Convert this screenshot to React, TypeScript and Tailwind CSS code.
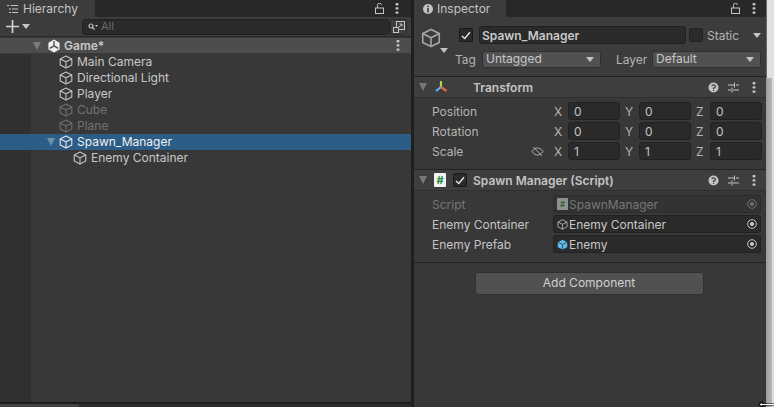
import React from "react";

const font = { fontFamily: "Inter, 'Noto Sans', sans-serif" };

function Cube({ size = 14, color = "#c4c4c4", className = "" }: { size?: number; color?: string; className?: string }) {
  return (
    <svg width={size} height={size} viewBox="0 0 14 14" fill="none" stroke={color} strokeWidth="1.1" strokeLinejoin="round" className={`shrink-0 ${className}`}>
      <path d="M7 1 L12.8 3.9 V10.1 L7 13 L1.2 10.1 V3.9 Z" />
      <path d="M1.2 3.9 L7 6.8 L12.8 3.9 M7 6.8 V13" />
    </svg>
  );
}

function Dots({ className = "" }: { className?: string }) {
  return (
    <svg width="4" height="11" viewBox="0 0 4 11" fill="#c4c4c4" className={`shrink-0 ${className}`}>
      <rect x="0.5" y="0" width="3" height="2.4" rx="0.8" />
      <rect x="0.5" y="4.2" width="3" height="2.4" rx="0.8" />
      <rect x="0.5" y="8.4" width="3" height="2.4" rx="0.8" />
    </svg>
  );
}

function Lock() {
  return (
    <svg width="9" height="11" viewBox="0 0 9 11" fill="none" stroke="#c4c4c4" strokeWidth="1" className="shrink-0">
      <rect x="0.5" y="5" width="8" height="5.5" />
      <path d="M2.5 5 V2.5 A2 2 0 0 1 6.5 2 " />
    </svg>
  );
}

function Tri({ color = "#6f6f6f", w = 8, h = 8 }: { color?: string; w?: number; h?: number }) {
  return (
    <svg width={w} height={h} viewBox="0 0 8 8" className="shrink-0" preserveAspectRatio="none">
      <path d="M0 0 H8 L4 8 Z" fill={color} />
    </svg>
  );
}

function Caret({ color = "#c4c4c4" }: { color?: string }) {
  return (
    <svg width="8" height="5" viewBox="0 0 8 5" className="shrink-0">
      <path d="M0 0 H8 L4 5 Z" fill={color} />
    </svg>
  );
}

function Check() {
  return (
    <span className="w-[14px] h-[14px] bg-[#2a2a2a] border border-[#191919] rounded-[2px] flex items-center justify-center shrink-0">
      <svg width="10" height="9" viewBox="0 0 10 9" fill="none" stroke="#e0e0e0" strokeWidth="1.5">
        <path d="M1 5 L3.8 7.5 L9 1.2" />
      </svg>
    </span>
  );
}

function HeaderIcons() {
  return (
    <div className="flex items-center shrink-0">
      <svg width="11" height="11" viewBox="0 0 11 11" className="shrink-0">
        <circle cx="5.5" cy="5.5" r="5" fill="#c4c4c4" />
        <path d="M3.8 4.2 A1.8 1.7 0 1 1 5.5 6.2 V7" stroke="#3c3c3c" strokeWidth="1.2" fill="none" />
        <rect x="4.9" y="7.7" width="1.2" height="1.2" fill="#3c3c3c" />
      </svg>
      <svg width="11" height="11" viewBox="0 0 11 11" stroke="#c4c4c4" strokeWidth="1" fill="none" className="shrink-0 ml-[9px]">
        <path d="M0 3 H6 M8 3 H11 M6.5 0.5 V5.5 M0 8 H3 M5 8 H11 M4 5.5 V10.5" />
      </svg>
      <Dots className="ml-[13px]" />
    </div>
  );
}

function Row({ label, indent = 59, dim = false, selected = false, arrow = false }: { label: string; indent?: number; dim?: boolean; selected?: boolean; arrow?: boolean }) {
  return (
    <div className={`h-[16px] flex items-center text-[12px] ${selected ? "bg-[#2c5d87] text-[#f0f0f0]" : dim ? "text-[#717171]" : "text-[#c8c8c8]"}`} style={{ paddingLeft: arrow ? indent - 12 : indent }}>
      {arrow && <span className="w-[12px]"><Tri color="#6f8fa8" w={8} h={8} /></span>}
      <Cube color={dim ? "#6e6e6e" : selected ? "#e6e6e6" : "#c4c4c4"} className="mr-[4px]" />
      <span>{label}</span>
    </div>
  );
}

function Num({ axis, value }: { axis: string; value: string }) {
  return (
    <div className="flex items-center">
      <span className="w-[14px] pt-[1px] text-[#b4b4b4] text-[12px]">{axis}</span>
      <span className="w-[52px] h-[18px] pt-[1px] bg-[#2a2a2a] border border-[#212121] rounded-[3px] pl-[5px] flex items-center text-[#c4c4c4] text-[12px]">{value}</span>
    </div>
  );
}

function VecRow({ label, v, link = false }: { label: string; v: string; link?: boolean }) {
  return (
    <div className="h-[20px] flex items-center pl-[18px]">
      <span className="w-[99px] pt-[1px] text-[#b4b4b4] text-[12px]">{label}</span>
      <span className="w-[22px] shrink-0 flex items-center">
        {link && (
          <svg width="13" height="11" viewBox="0 0 13 11" fill="none" stroke="#b0b0b0" strokeWidth="1">
            <path d="M1 5.5 C3 2.5 5 2 6.5 2 C8 2 10 2.5 12 5.5 C10 8.5 8 9 6.5 9 C5 9 3 8.5 1 5.5 Z" />
            <path d="M2.5 1 L11 10" />
          </svg>
        )}
      </span>
      <div className="flex gap-[5px] ml-[1px]">
        <Num axis="X" value={v} />
        <Num axis="Y" value={v} />
        <Num axis="Z" value={v} />
      </div>
    </div>
  );
}

function ObjField({ label, value, icon, dim = false }: { label: string; value: string; icon: React.ReactNode; dim?: boolean }) {
  return (
    <div className="h-[20px] flex items-center pl-[18px]">
      <span className={`w-[121px] pt-[1px] text-[12px] ${dim ? "text-[#767676]" : "text-[#c4c4c4]"}`}>{label}</span>
      <div className={`w-[208px] h-[18px] rounded-[3px] border flex items-center pl-[3px] pr-[3px] text-[12px] ${dim ? "bg-[#333333] border-[#2b2b2b] text-[#777777]" : "bg-[#2a2a2a] border-[#212121] text-[#c8c8c8]"}`}>
        {icon}
        <span className="ml-[1px] pt-[1px] flex-1">{value}</span>
        <svg width="10" height="10" viewBox="0 0 10 10" fill="none" stroke={dim ? "#707070" : "#c4c4c4"} className="shrink-0">
          <circle cx="5" cy="5" r="4.3" />
          <circle cx="5" cy="5" r="1.6" fill={dim ? "#707070" : "#c4c4c4"} />
        </svg>
      </div>
    </div>
  );
}

function Dropdown({ text, w }: { text: string; w: number }) {
  return (
    <div className="h-[17px] pb-[1px] bg-[#515151] border border-[#303030] rounded-[3px] flex items-center justify-between pl-[3px] pr-[6px] text-[12px] text-[#c8c8c8]" style={{ width: w }}>
      <span>{text}</span>
      <Caret />
    </div>
  );
}

export default function App() {
  return (
    <div className="relative w-[774px] h-[407px] overflow-hidden flex bg-[#383838] text-[12px]" style={font}>
      {/* Hierarchy */}
      <div className="w-[411px] h-full flex flex-col shrink-0">
        <div className="h-[17px] bg-[#282828] flex items-center shrink-0">
          <div className="w-[95px] h-full bg-[#3c3c3c] flex items-center pl-[7px] text-[#c4c4c4]">
            <svg width="12" height="10" viewBox="0 0 12 10" stroke="#c4c4c4" fill="none" className="mr-[4px]">
              <path d="M0 1.5 H2 M3.5 1.5 H11 M2 5 H4 M5 5 H11 M2 8.5 H4 M5 8.5 H11" />
            </svg>
            <span>Hierarchy</span>
          </div>
          <div className="flex-1 flex justify-end items-center gap-[11px] pr-[12px]">
            <Lock />
            <Dots />
          </div>
        </div>
        <div className="h-[20px] bg-[#3c3c3c] border-b border-[#282828] flex items-center pl-[6px] pr-[4px] shrink-0">
          <svg width="13" height="13" viewBox="0 0 13 13" stroke="#d0d0d0" strokeWidth="1.7" className="shrink-0">
            <path d="M6.5 0 V13 M0 6.5 H13" />
          </svg>
          <span className="ml-[3px]"><Caret /></span>
          <div className="ml-[52px] flex-1 h-[16px] bg-[#2a2a2a] border border-[#212121] rounded-[4px] flex items-center pl-[5px] text-[#6c6c6c] text-[11px]">
            <svg width="10" height="8" viewBox="0 0 10 8" fill="none" stroke="#c4c4c4" strokeWidth="1.2" className="mr-[3px]">
              <circle cx="3" cy="3" r="2" />
              <path d="M4.5 4.5 L6.5 6.5" />
              <path d="M7 2 H10 L8.5 4 Z" fill="#c4c4c4" stroke="none" />
            </svg>
            <span>All</span>
          </div>
          <div className="w-[17px] h-[16px] bg-[#3e3e3e] border border-[#2b2b2b] rounded-r-[3px] flex items-center justify-center shrink-0">
            <svg width="12" height="12" viewBox="0 0 12 12" fill="none" stroke="#c4c4c4">
              <rect x="3.5" y="0.5" width="8" height="8" />
              <rect x="0.5" y="6.5" width="5" height="5" fill="#3e3e3e" />
              <path d="M5 7 L9 3 M6.5 3 H9 V5.5" />
            </svg>
          </div>
        </div>
        <div className="h-[16px] mt-[1px] bg-[#4d4d4d] border-b border-[#3a3a3a] flex items-center pl-[33px] pr-[11px] font-semibold text-[#c8c8c8] shrink-0">
          <span className="mr-[6px]"><Tri color="#7a7a7a" /></span>
          <svg width="14" height="14" viewBox="0 0 14 14" className="mr-[3px] shrink-0">
            <path d="M7 0.5 L12.6 3.7 V10.3 L7 13.5 L1.4 10.3 V3.7 Z" fill="#f0f0f0" />
            <path d="M7 2 V6.8 M7 6.8 L2.8 9.4 M7 6.8 L11.2 9.4" stroke="#4d4d4d" strokeWidth="1.4" />
          </svg>
          <span className="flex-1">Game*</span>
          <Dots />
        </div>
        <div className="flex-1 min-h-0 flex">
          <div className="w-[31px] bg-[#303030] shrink-0 relative">
            <div className="absolute left-0 top-[80px] w-[31px] h-[16px] bg-[#2c5d87]" />
          </div>
          <div className="flex-1 -ml-[31px] relative flex flex-col">
            <Row label="Main Camera" />
            <Row label="Directional Light" />
            <Row label="Player" />
            <Row label="Cube" dim />
            <Row label="Plane" dim />
            <Row label="Spawn_Manager" selected arrow />
            <Row label="Enemy Container" indent={73} />
          </div>
        </div>
        <div className="h-[2px] bg-[#1d1d1d] shrink-0" />
        <div className="h-[3px] bg-[#2b2b2b] shrink-0 flex">
          <div className="w-[79px] h-full bg-[#424242]" />
        </div>
      </div>
      <div className="w-[3px] h-full bg-[#1f1f1f] shrink-0" />

      {/* Inspector */}
      <div className="flex-1 h-full flex min-w-0">
        <div className="flex-1 min-w-0 flex flex-col">
          <div className="h-[17px] bg-[#282828] flex items-center shrink-0">
            <div className="w-[92px] h-full bg-[#3c3c3c] flex items-center pl-[9px] text-[#c4c4c4]">
              <svg width="10" height="10" viewBox="0 0 10 10" className="mr-[4px] shrink-0">
                <circle cx="5" cy="5" r="5" fill="#c4c4c4" />
                <rect x="4.2" y="1.6" width="1.6" height="1.6" fill="#3c3c3c" />
                <rect x="4.2" y="4" width="1.6" height="4.4" fill="#3c3c3c" />
              </svg>
              <span>Inspector</span>
            </div>
            <div className="flex-1 flex justify-end items-center gap-[12px] pr-[10px]">
              <Lock />
              <Dots />
            </div>
          </div>
          {/* Header */}
          <div className="h-[60px] bg-[#3c3c3c] border-b border-[#232323] flex pl-[7px] shrink-0">
            <div className="relative w-[26px] mt-[11px] h-[26px] shrink-0">
              <Cube size={20} color="#a8a8a8" />
              <span className="absolute left-[19px] top-[20px]"><Caret color="#c4c4c4" /></span>
            </div>
            <div className="flex-1 flex flex-col pl-[7px]">
              <div className="h-[18px] mt-[9px] flex items-center pl-[5px]">
                <Check />
                <div className="ml-[6px] w-[207px] h-[18px] pt-[1px] bg-[#2a2a2a] border border-[#212121] rounded-[3px] pl-[2px] flex items-center font-semibold text-[#c8c8c8]">Spawn_Manager</div>
                <span className="ml-[3px] w-[14px] h-[14px] bg-[#2a2a2a] border border-[#212121] rounded-[2px] shrink-0" />
                <span className="ml-[4px] pt-[1px] text-[#b4b4b4]">Static</span>
                <span className="ml-[14px]"><Caret /></span>
              </div>
              <div className="h-[17px] mt-[7px] flex items-center pl-[1px]">
                <span className="text-[#b4b4b4] w-[27px]">Tag</span>
                <Dropdown text="Untagged" w={119} />
                <span className="ml-[15px] w-[36px] text-[#b4b4b4]">Layer</span>
                <Dropdown text="Default" w={109} />
              </div>
            </div>
          </div>
          {/* Transform */}
          <div className="h-[21px] bg-[#3e3e3e] border-b border-[#2f2f2f] flex items-center pl-[5px] pr-[10px] shrink-0">
            <Tri color="#787878" />
            <svg width="14" height="14" viewBox="0 0 14 14" className="ml-[7px] shrink-0" strokeWidth="2.2" fill="none">
              <path d="M7 1 V7" stroke="#a5d64c" />
              <path d="M7 7 L2 11" stroke="#5bb4ea" />
              <path d="M7 7 L12.5 11" stroke="#e8663c" />
            </svg>
            <span className="ml-[25px] pt-[1px] flex-1 font-semibold text-[#c4c4c4]">Transform</span>
            <HeaderIcons />
          </div>
          <div className="pt-[3px] pb-[8px] bg-[#383838] border-b border-[#232323] shrink-0">
            <VecRow label="Position" v="0" />
            <VecRow label="Rotation" v="0" />
            <VecRow label="Scale" v="1" link />
          </div>
          {/* Script */}
          <div className="h-[21px] bg-[#3e3e3e] border-b border-[#2f2f2f] flex items-center pl-[5px] pr-[10px] shrink-0">
            <Tri color="#787878" />
            <span className="ml-[7px] w-[12px] h-[14px] bg-[#f2f2f2] rounded-[1px] text-[#1f8a3c] text-[11px] font-bold flex items-center justify-center shrink-0">#</span>
            <span className="ml-[7px]"><Check /></span>
            <span className="ml-[6px] pt-[1px] flex-1 font-semibold text-[#c4c4c4]">Spawn Manager (Script)</span>
            <HeaderIcons />
          </div>
          <div className="pt-[3px] pb-[8px] bg-[#383838] border-b border-[#232323] shrink-0">
            <ObjField
              label="Script"
              value="SpawnManager"
              dim
              icon={<span className="w-[11px] h-[12px] bg-[#8a948c] rounded-[1px] text-[#3d5a44] text-[8px] font-bold flex items-center justify-center shrink-0">#</span>}
            />
            <ObjField label="Enemy Container" value="Enemy Container" icon={<Cube size={11} color="#b8b8b8" />} />
            <ObjField
              label="Enemy Prefab"
              value="Enemy"
              icon={
                <svg width="11" height="11" viewBox="0 0 14 14" className="shrink-0">
                  <path d="M7 1 L13 4 V10.5 L7 13.5 L1 10.5 V4 Z" fill="#62b9ec" />
                  <path d="M1 4 L7 7 L13 4 M7 7 V13.5" stroke="#2a2a2a" strokeWidth="0.9" fill="none" />
                </svg>
              }
            />
          </div>
          <div className="flex justify-center pt-[9px] pr-[2px]">
            <div className="w-[229px] h-[23px] pb-[1px] bg-[#515151] border border-[#303030] rounded-[3px] flex items-center justify-center text-[#d0d0d0]">Add Component</div>
          </div>
        </div>
        {/* Scrollbar and window edge */}
        <div className="w-[8px] shrink-0 flex flex-col bg-[#e0e0e0]">
          <div className="h-[78px] border-l border-[#6a6a6a]" />
          <div className="flex-1 flex">
            <div className="w-[6px] bg-gradient-to-r from-[#9c9c9c] to-[#b8b8b8]" />
            <div className="flex-1 bg-[#dedede]" />
          </div>
        </div>
      </div>
      {/* Mouse cursor */}
      <svg width="16" height="9" viewBox="0 0 16 9" className="absolute left-[758px] top-[400px]">
        <path d="M0.5 4.5 L4.5 0.5 V3.5 H16 V5.5 H4.5 V8.5 Z" fill="#000" />
        <path d="M1.8 4.5 L3.6 2.7 V4 H16 V5 H3.6 V6.3 Z" fill="#fff" />
      </svg>
    </div>
  );
}
